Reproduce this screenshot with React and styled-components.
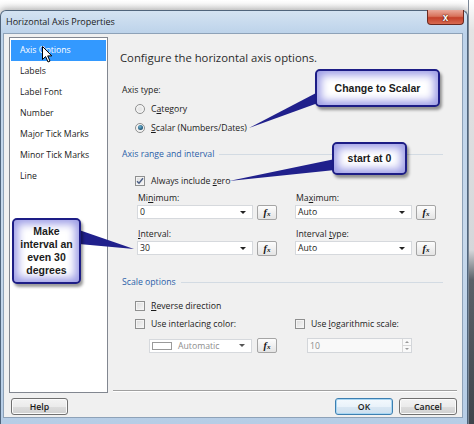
import React from "react";
import styled, { createGlobalStyle } from "styled-components";

const GlobalStyle = createGlobalStyle`
  html, body { margin: 0; padding: 0; background: #fff; }
  body { font-family: "Open Sans", "Noto Sans", sans-serif; -webkit-font-smoothing: antialiased; }
  * { box-sizing: border-box; }
`;

const Screen = styled.div`
  position: relative;
  width: 474px;
  height: 424px;
  display: flex;
  align-items: flex-end;
  overflow: hidden;
  background: linear-gradient(#ffffff, #f3f3f3 10px);
`;

const Dialog = styled.div`
  width: 468px;
  height: 414px;
  display: flex;
  flex-direction: column;
  border: 1px solid #50657c;
  border-bottom: none;
  border-radius: 6px 6px 0 0;
  background: linear-gradient(180deg, #d4e3f2 0%, #bdd3ea 22px, #c7d9ec 55%, #b6cde6 100%);
  box-shadow: 0 -2px 6px rgba(0, 0, 0, 0.25);
`;

const Backdrop = styled.div`
  width: 6px;
  height: 424px;
  background: linear-gradient(180deg, #ffffff 0, #e4e4e4 30px, #d5d7da 250px, #5b6168 280px, #3f454c 100%);
  border-left: 1px solid #7a8796;
`;

const TitleBar = styled.div`
  height: 22px;
  display: flex;
  align-items: flex-start;
  justify-content: space-between;
  padding: 0 3px 0 5px;
`;

const TitleText = styled.span`
  font-size: 9px;
  line-height: 22px;
  color: #1b1b1b;
`;

const CloseButton = styled.div`
  width: 37px;
  height: 15px;
  margin-top: -1px;
  border: 1px solid #6b2a20;
  border-top: none;
  border-radius: 0 0 4px 4px;
  background: linear-gradient(#eaa99b, #d8725b 45%, #c4402a 55%, #d86b50);
  display: flex;
  align-items: center;
  justify-content: center;
  color: #fff;
  font: bold 10px "Liberation Sans", Arial, sans-serif;
  text-shadow: 0 0 2px #4f1207, 0 0 1px #4f1207;
`;

const Client = styled.div`
  flex: 1;
  margin: 0 4px 6px 2px;
  border: 1px solid #8ea2b8;
  background: #f0f0f0;
  display: grid;
  grid-template-columns: 99px 1fr;
  grid-template-rows: 1fr 17px;
  row-gap: 5px;
  padding: 3px 5px 2px 5px;
  color: #1b1b1b;
  font-size: 8.7px;
`;

const NavList = styled.ul`
  margin: 0;
  padding: 2px 1px;
  list-style: none;
  background: #fff;
  border: 1px solid #828790;
`;

const NavItem = styled.li`
  height: 21px;
  line-height: 21px;
  padding-left: 9px;
  white-space: nowrap;
  background: ${(p) => (p.$active ? "#3399ff" : "transparent")};
  color: ${(p) => (p.$active ? "#fff" : "#1b1b1b")};
`;

const Main = styled.div`
  display: flex;
  flex-direction: column;
  padding: 13px 0 1px 12px;
`;

const Heading = styled.h1`
  margin: 0;
  font-size: 11.3px;
  font-weight: 400;
  line-height: 16px;
  color: #2b2b2b;
  white-space: nowrap;
`;

const Label = styled.div`
  height: 12px;
  line-height: 12px;
  white-space: nowrap;
  margin-top: ${(p) => p.$top || 0}px;
  padding-left: ${(p) => p.$indent || 0}px;
  color: ${(p) => (p.$muted ? "#8d8d8d" : "inherit")};
`;

const SectionTitle = styled.div`
  display: flex;
  align-items: center;
  height: 12px;
  margin-top: ${(p) => p.$top}px;
  padding-left: 2px;
  color: #2a5ea8;
  white-space: nowrap;
  &::after {
    content: "";
    flex: 1;
    height: 1px;
    margin: 1px 14px 0 5px;
    background: #d3dbe3;
  }
`;

const OptionGroup = styled.div`
  display: flex;
  flex-direction: column;
  margin-top: ${(p) => p.$top}px;
  padding-left: 15px;
`;

const OptionRow = styled.div`
  display: flex;
  align-items: center;
  gap: 6px;
  height: ${(p) => p.$h || 19}px;
  margin-top: ${(p) => p.$top || 0}px;
  white-space: nowrap;
`;

const Radio = styled.span`
  width: 10px;
  height: 10px;
  border-radius: 50%;
  border: 1px solid #8e8f8f;
  background: radial-gradient(circle, #e8e8e8 30%, #f8f8f8 70%);
  display: flex;
  align-items: center;
  justify-content: center;
  &::after {
    content: "";
    display: ${(p) => (p.$on ? "block" : "none")};
    width: 5px;
    height: 5px;
    border-radius: 50%;
    background: radial-gradient(circle at 40% 35%, #6fb3d2, #1f5677 70%);
  }
`;

const Check = styled.span`
  width: 10px;
  height: 10px;
  border: 1px solid #8e8f8f;
  background: linear-gradient(135deg, #dcdcdc, #f7f7f7);
  box-shadow: inset 0 0 0 1px #f4f4f4;
  display: flex;
  align-items: center;
  justify-content: center;
`;

const Key = styled.u`
  text-decoration-thickness: 1px;
  text-underline-offset: 1px;
`;

const FieldGrid = styled.div`
  display: grid;
  grid-template-columns: 140px 141px;
  column-gap: 18px;
  row-gap: 9px;
  margin-top: 5px;
  padding-left: 17px;
`;

const Field = styled.div`
  display: flex;
  flex-direction: column;
  gap: 1px;
`;

const ComboRow = styled.div`
  display: flex;
  align-items: center;
  gap: ${(p) => p.$gap || 4}px;
  height: ${(p) => p.$h || 14}px;
`;

const Combo = styled.div`
  width: ${(p) => p.$w}px;
  height: 14px;
  border: 1px solid #d6d9dd;
  background: #fff;
  display: flex;
  align-items: center;
  justify-content: space-between;
  padding: 0 6px 0 2px;
  color: ${(p) => (p.$disabled ? "#8d8d8d" : "#1b1b1b")};
  &::after {
    content: "";
    border-top: 3px solid ${(p) => (p.$disabled ? "#555" : "#222")};
    border-left: 3px solid transparent;
    border-right: 3px solid transparent;
  }
`;

const Swatch = styled.span`
  width: 20px;
  height: 8px;
  border: 1px solid #9a9a9a;
  background: #fff;
  margin-right: 6px;
`;

const ComboValue = styled.span`
  flex: 1;
  display: flex;
  align-items: center;
`;

const Fx = styled.button`
  width: 20px;
  height: 15px;
  padding: 0;
  border: 1px solid #a5a5a5;
  border-radius: 2px;
  background: linear-gradient(#fdfdfd, #e4e4e4);
  font: italic bold 10px "Liberation Serif", serif;
  color: #111;
  display: flex;
  align-items: center;
  justify-content: center;
  span {
    font-size: 7px;
    margin-top: 3px;
  }
`;

const ScaleGrid = styled.div`
  display: grid;
  grid-template-columns: 160px 1fr;
  margin-top: 6px;
  padding-left: 15px;
`;

const ColorRow = styled.div`
  display: flex;
  align-items: center;
  height: 15px;
  margin-top: 8px;
  padding-left: 29px;
`;

const Spin = styled.div`
  width: 105px;
  height: 15px;
  margin-left: 30px;
  border: 1px solid #d3d6da;
  background: #f9f9f9;
  display: flex;
  align-items: center;
  justify-content: space-between;
  padding-left: 2px;
  color: #8d8d8d;
`;

const SpinButtons = styled.div`
  width: 9px;
  height: 13px;
  display: flex;
  flex-direction: column;
  border-left: 1px solid #d8d8d8;
`;

const SpinArrow = styled.span`
  flex: 1;
  display: flex;
  align-items: center;
  justify-content: center;
  border-bottom: ${(p) => (p.$up ? "1px solid #d8d8d8" : "none")};
  &::after {
    content: "";
    border-left: 2px solid transparent;
    border-right: 2px solid transparent;
    ${(p) => (p.$up ? "border-bottom: 2px solid #999;" : "border-top: 2px solid #999;")}
  }
`;

const Spacer = styled.div`
  flex: 1;
`;

const Separator = styled.div`
  height: 2px;
  margin-left: -7px;
  border-top: 1px solid #a0a0a0;
  border-bottom: 1px solid #fff;
`;

const ButtonBar = styled.div`
  grid-column: 1 / -1;
  display: flex;
  gap: 6px;
  padding-left: 2px;
`;

const DialogButton = styled.button`
  width: ${(p) => p.$w}px;
  height: 17px;
  padding: 0;
  font: 600 8.7px "Open Sans", "Noto Sans", sans-serif;
  color: #1a1a1a;
  border: 1px solid ${(p) => (p.$default ? "#3c7fb1" : "#707070")};
  border-radius: 3px;
  background: ${(p) =>
    p.$default
      ? "linear-gradient(#f4f9fd 0%, #e9f2fa 50%, #d9e7f3 51%, #cddfef 100%)"
      : "linear-gradient(#f3f3f3 0%, #ebebeb 50%, #dddddd 51%, #d0d0d0 100%)"};
  box-shadow: inset 0 0 0 1px ${(p) => (p.$default ? "#a9d6f2" : "#fbfbfb")};
`;

const Overlay = styled.svg`
  position: absolute;
  left: 0;
  top: 0;
  pointer-events: none;
`;

const Callout = styled.div`
  position: absolute;
  left: ${(p) => p.$x}px;
  top: ${(p) => p.$y}px;
  width: ${(p) => p.$w}px;
  height: ${(p) => p.$h}px;
  border: 2px solid #1d1d86;
  border-radius: 5px;
  background: #fff;
  box-shadow: inset 0 0 9px 4px #9d9de6, 2px 3px 3px rgba(0, 0, 0, 0.4);
  display: flex;
  align-items: center;
  justify-content: center;
  text-align: center;
  font: bold 10.5px/13px "Liberation Sans", Arial, sans-serif;
  color: #1b1b1b;
`;

const Cursor = styled.svg`
  position: absolute;
  left: 42px;
  top: 46px;
`;

const navItems = [
  "Axis Options",
  "Labels",
  "Label Font",
  "Number",
  "Major Tick Marks",
  "Minor Tick Marks",
  "Line",
];

const CheckMark = () => (
  <svg width="8" height="8" viewBox="0 0 8 8">
    <path d="M1 4.2 L3 6.3 L7 1.2" fill="none" stroke="#4b5f86" strokeWidth="1.4" />
  </svg>
);

const FxButton = () => (
  <Fx>
    f<span>x</span>
  </Fx>
);

export default function App() {
  return (
    <Screen>
      <GlobalStyle />
      <Dialog>
        <TitleBar>
          <TitleText>Horizontal Axis Properties</TitleText>
          <CloseButton>x</CloseButton>
        </TitleBar>
        <Client>
          <NavList>
            {navItems.map((item, i) => (
              <NavItem key={item} $active={i === 0}>
                {item}
              </NavItem>
            ))}
          </NavList>
          <Main>
            <Heading>Configure the horizontal axis options.</Heading>
            <Label $top={18} $indent={2}>Axis type:</Label>
            <OptionGroup $top={3}>
              <OptionRow>
                <Radio />
                <span>C<Key>a</Key>tegory</span>
              </OptionRow>
              <OptionRow>
                <Radio $on />
                <span><Key>S</Key>calar (Numbers/Dates)</span>
              </OptionRow>
            </OptionGroup>

            <SectionTitle $top={11}>Axis range and interval</SectionTitle>
            <OptionGroup $top={15}>
              <OptionRow $h={12}>
                <Check><CheckMark /></Check>
                <span>Always include <Key>z</Key>ero</span>
              </OptionRow>
            </OptionGroup>
            <FieldGrid>
              <Field>
                <Label $indent={1}>Mi<Key>n</Key>imum:</Label>
                <ComboRow>
                  <Combo $w={116}>0</Combo>
                  <FxButton />
                </ComboRow>
              </Field>
              <Field>
                <Label $indent={1}>Ma<Key>x</Key>imum:</Label>
                <ComboRow>
                  <Combo $w={117}>Auto</Combo>
                  <FxButton />
                </ComboRow>
              </Field>
              <Field>
                <Label $indent={1}><Key>I</Key>nterval:</Label>
                <ComboRow>
                  <Combo $w={116}>30</Combo>
                  <FxButton />
                </ComboRow>
              </Field>
              <Field>
                <Label $indent={1}>Interval <Key>t</Key>ype:</Label>
                <ComboRow>
                  <Combo $w={117}>Auto</Combo>
                  <FxButton />
                </ComboRow>
              </Field>
            </FieldGrid>

            <SectionTitle $top={21}>Scale options</SectionTitle>
            <OptionGroup $top={12}>
              <OptionRow $h={12}>
                <Check />
                <span><Key>R</Key>everse direction</span>
              </OptionRow>
            </OptionGroup>
            <ScaleGrid>
              <OptionRow $h={12}>
                <Check />
                <span>Use interlacin<Key>g</Key> color:</span>
              </OptionRow>
              <OptionRow $h={12}>
                <Check />
                <span>Use <Key>l</Key>ogarithmic scale:</span>
              </OptionRow>
            </ScaleGrid>
            <ColorRow>
              <ComboRow $gap={5} $h={15}>
                <Combo $w={103} $disabled>
                  <ComboValue>
                    <Swatch />
                    Automatic
                  </ComboValue>
                </Combo>
                <FxButton />
              </ComboRow>
              <Spin>
                10
                <SpinButtons>
                  <SpinArrow $up />
                  <SpinArrow />
                </SpinButtons>
              </Spin>
            </ColorRow>
            <Spacer />
            <Separator />
          </Main>
          <ButtonBar>
            <DialogButton $w={57}>Help</DialogButton>
            <Spacer />
            <DialogButton $w={58} $default>OK</DialogButton>
            <DialogButton $w={58}>Cancel</DialogButton>
          </ButtonBar>
        </Client>
      </Dialog>
      <Backdrop />

      <Cursor width="11" height="17" viewBox="0 0 11 17">
        <path d="M0.5 0.5 L0.5 13.5 L3.6 10.6 L6 16 L8 15.1 L5.7 9.9 L9.8 9.9 Z" fill="#fff" stroke="#000" strokeWidth="1" />
      </Cursor>

      <Overlay width="474" height="424" viewBox="0 0 474 424">
        <polygon points="249,128 318,92 318,103" fill="#20208c" />
        <polygon points="229,181 335,159 335,170" fill="#20208c" />
        <polygon points="79,230 79,244 134,249" fill="#20208c" />
      </Overlay>
      <Callout $x={315} $y={69} $w={125} $h={38}>Change to Scalar</Callout>
      <Callout $x={332} $y={142} $w={75} $h={33}>start at 0</Callout>
      <Callout $x={12} $y={218} $w={69} $h={66}>
        Make
        <br />
        interval an
        <br />
        even 30
        <br />
        degrees
      </Callout>
    </Screen>
  );
}
